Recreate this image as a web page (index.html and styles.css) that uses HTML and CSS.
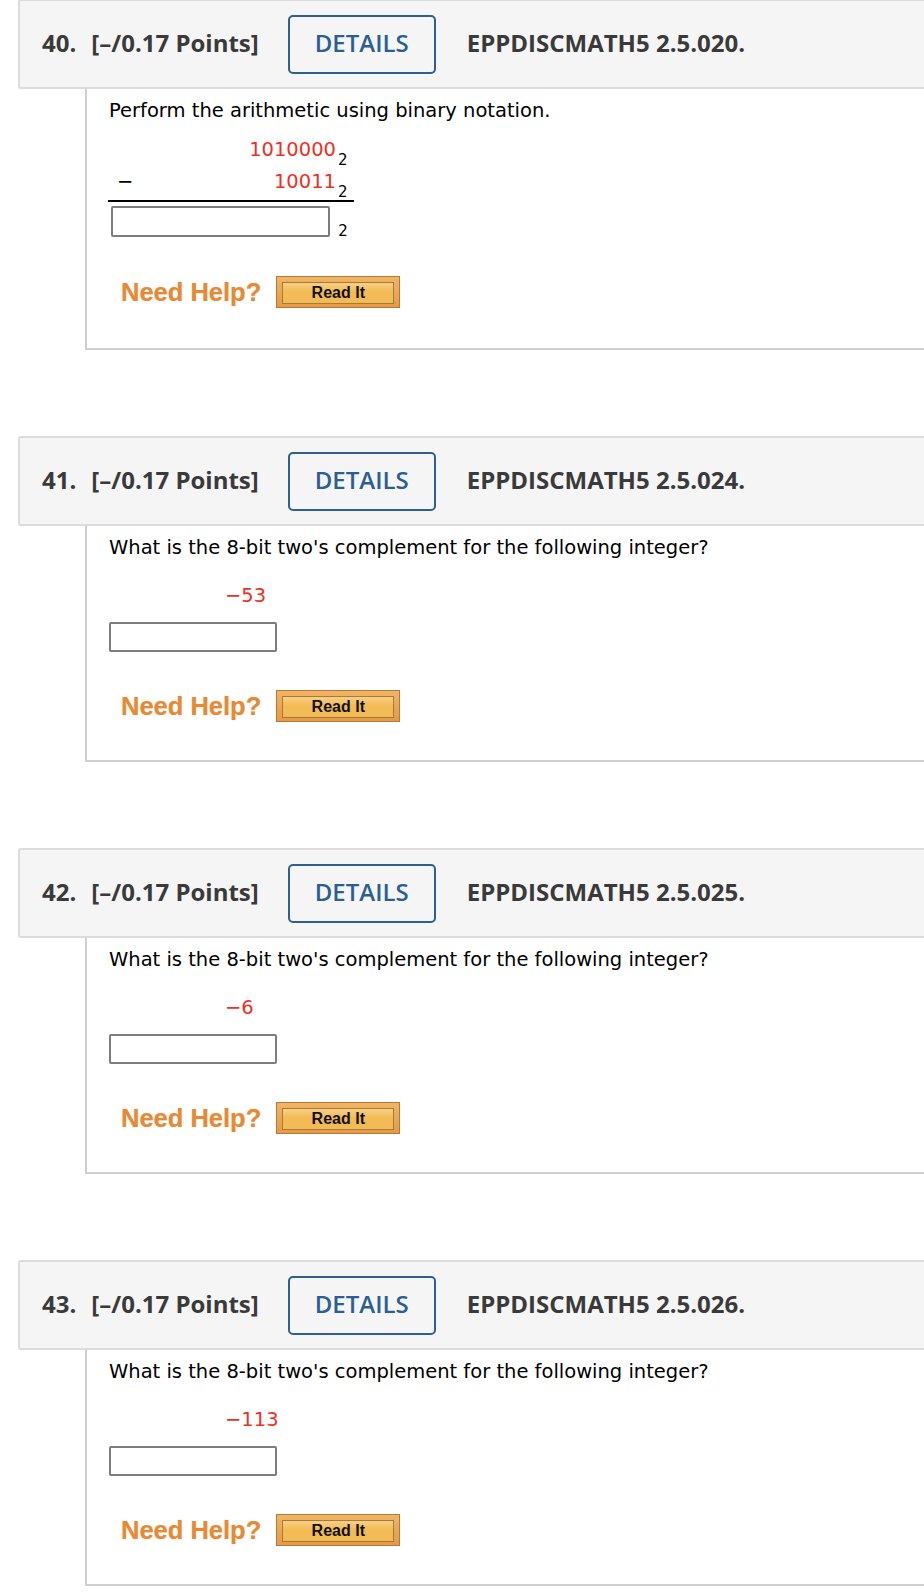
FILE: index.html
```html
<!DOCTYPE html>
<html>
<head>
    <title>Assignment</title>
    <link rel="stylesheet" href="styles.css">
</head>
<body>
    <div class="questions">
        <!-- Question 40 -->
        <div class="question">
            <div class="question-header">
                <span class="qnum">40.</span>
                <span class="points">[–/0.17 Points]</span>
                <button class="details-btn">DETAILS</button>
                <span class="qref">EPPDISCMATH5 2.5.020.</span>
            </div>
            <div class="question-body first">
                <p class="prompt">Perform the arithmetic using binary notation.</p>
                <div class="arith">
                    <div class="arith-row">
                        <span class="num">1010000</span><span class="base">2</span>
                    </div>
                    <div class="arith-row arith-sub">
                        <span class="op">−</span>
                        <span class="num">10011</span><span class="base">2</span>
                    </div>
                    <div class="arith-answer">
                        <input type="text" class="answer wide"><span class="base">2</span>
                    </div>
                </div>
                <div class="help">
                    <span class="need-help">Need Help?</span>
                    <span class="read-it"><span>Read It</span></span>
                </div>
            </div>
        </div>

        <!-- Question 41 -->
        <div class="question">
            <div class="question-header">
                <span class="qnum">41.</span>
                <span class="points">[–/0.17 Points]</span>
                <button class="details-btn">DETAILS</button>
                <span class="qref">EPPDISCMATH5 2.5.024.</span>
            </div>
            <div class="question-body">
                <p class="prompt">What is the 8-bit two's complement for the following integer?</p>
                <div class="given">−53</div>
                <input type="text" class="answer">
                <div class="help">
                    <span class="need-help">Need Help?</span>
                    <span class="read-it"><span>Read It</span></span>
                </div>
            </div>
        </div>

        <!-- Question 42 -->
        <div class="question">
            <div class="question-header">
                <span class="qnum">42.</span>
                <span class="points">[–/0.17 Points]</span>
                <button class="details-btn">DETAILS</button>
                <span class="qref">EPPDISCMATH5 2.5.025.</span>
            </div>
            <div class="question-body">
                <p class="prompt">What is the 8-bit two's complement for the following integer?</p>
                <div class="given">−6</div>
                <input type="text" class="answer">
                <div class="help">
                    <span class="need-help">Need Help?</span>
                    <span class="read-it"><span>Read It</span></span>
                </div>
            </div>
        </div>

        <!-- Question 43 -->
        <div class="question">
            <div class="question-header">
                <span class="qnum">43.</span>
                <span class="points">[–/0.17 Points]</span>
                <button class="details-btn">DETAILS</button>
                <span class="qref">EPPDISCMATH5 2.5.026.</span>
            </div>
            <div class="question-body">
                <p class="prompt">What is the 8-bit two's complement for the following integer?</p>
                <div class="given">−113</div>
                <input type="text" class="answer">
                <div class="help">
                    <span class="need-help">Need Help?</span>
                    <span class="read-it"><span>Read It</span></span>
                </div>
            </div>
        </div>
    </div>
</body>
</html>
```

FILE: styles.css
```css
* {
    box-sizing: border-box;
}

body {
    margin: 0;
    background: #fff;
    color: #000;
    overflow: hidden;
    font-family: "DejaVu Sans", Verdana, sans-serif;
}

.questions {
    padding-left: 18px;
    margin-top: -1px;
    margin-right: -10px;
}

.question {
    margin-bottom: 86px;
}

.question-header {
    display: flex;
    align-items: center;
    height: 90px;
    padding-left: 22px;
    background: #f5f5f5;
    border: 2px solid #dcdcdc;
    border-right: none;
    border-radius: 3px 0 0 3px;
    font-family: "Open Sans", sans-serif;
    font-size: 24px;
    font-weight: 700;
    color: #3a3a3a;
}

.qnum,
.points,
.qref {
    padding-bottom: 4px;
}

.qnum {
    margin-right: 15px;
}

.details-btn {
    margin-left: 29px;
    height: 59px;
    padding: 0 25px 3px;
    border: 2px solid #2d5f91;
    border-radius: 5px;
    background: transparent;
    font-family: "Open Sans", sans-serif;
    font-size: 24px;
    font-weight: 600;
    color: #2b5f93;
}

.qref {
    margin-left: 31px;
}

.question-body {
    margin-left: 67px;
    border-left: 2px solid #cfcfcf;
    border-bottom: 2px solid #cfcfcf;
    padding: 11px 0 38px 22px;
}

.question-body.first {
    padding-bottom: 40px;
}

.prompt {
    margin: 0;
    font-size: 19.5px;
    line-height: 22px;
}

.given {
    margin-top: 26px;
    padding-left: 116px;
    color: #ee3124;
    font-size: 19.5px;
    line-height: 22px;
}

.answer {
    display: block;
    width: 168px;
    height: 30px;
    margin: 15px 0 0;
    border: 2px solid #7d7d7d;
    border-radius: 2px;
    background: #fff;
}

/* binary subtraction layout */
.arith {
    width: 246px;
    margin: 17px 0 0 -1px;
    font-size: 19.5px;
    line-height: 22px;
}

.arith-row {
    display: flex;
    justify-content: flex-end;
    height: 32px;
}

.arith-sub {
    height: 31px;
    border-bottom: 2px solid #000;
}

.arith .num {
    color: #ee3124;
}

.op {
    margin-left: 9px;
    margin-right: auto;
}

.base {
    position: relative;
    top: 10px;
    width: 18px;
    padding-left: 2px;
    font-size: 15px;
}

.arith-answer {
    display: flex;
    align-items: flex-end;
    margin-top: 4px;
}

.answer.wide {
    width: 221px;
    height: 31px;
    margin: 0 0 0 3px;
}

.arith-answer .base {
    top: 2px;
    margin-left: 6px;
    line-height: 15px;
}

.first .help {
    margin-top: 39px;
}

.help {
    display: flex;
    align-items: center;
    height: 32px;
    margin-top: 38px;
    padding-left: 12px;
}

.need-help {
    margin-right: 15px;
    font-family: "Liberation Sans", Arial, sans-serif;
    font-size: 25.5px;
    font-weight: 700;
    color: #e58a37;
    text-shadow: 0 0 1px rgba(229, 138, 55, 0.5);
}

.read-it {
    display: flex;
    width: 124px;
    height: 32px;
    padding: 5px 5px 3px 5px;
    background: linear-gradient(#f0b565, #e69a42);
    border: 1px solid #b5773a;
}

.read-it span {
    flex: 1;
    display: flex;
    align-items: center;
    justify-content: center;
    border: 1px solid #a37a3f;
    background: linear-gradient(#f8d084, #f2bb55 45%);
    font-family: "Liberation Sans", Arial, sans-serif;
    font-size: 16px;
    font-weight: 700;
    color: #111;
}
```
